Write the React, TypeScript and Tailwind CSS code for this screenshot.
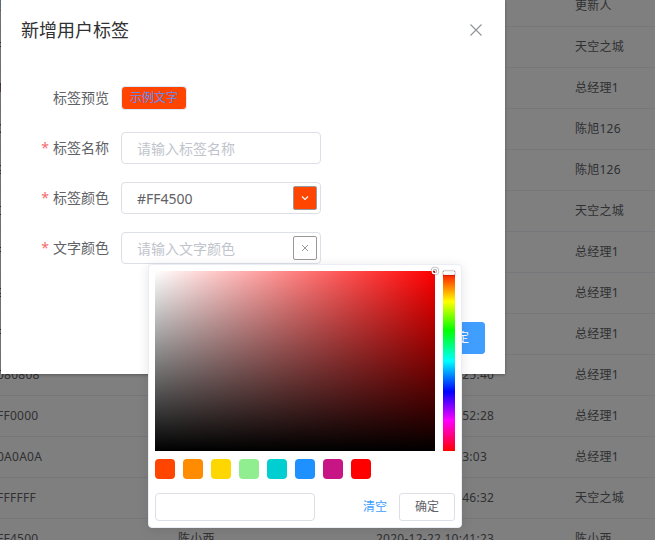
const rows = [
  { color: "颜色", creator: "创建人", time: "更新时间", user: "更新人" },
  { color: "#FF4500", creator: "天空之城", time: "2020-12-24 09:12:33", user: "天空之城" },
  { color: "#1E90FF", creator: "总经理1", time: "2020-12-24 09:10:21", user: "总经理1" },
  { color: "#C71585", creator: "陈旭126", time: "2020-12-23 18:05:47", user: "陈旭126" },
  { color: "#90EE90", creator: "陈旭126", time: "2020-12-23 17:58:12", user: "陈旭126" },
  { color: "#00CED1", creator: "天空之城", time: "2020-12-23 16:30:09", user: "天空之城" },
  { color: "#FFD700", creator: "总经理1", time: "2020-12-23 15:22:18", user: "总经理1" },
  { color: "#90EE90", creator: "总经理1", time: "2020-12-23 14:08:55", user: "总经理1" },
  { color: "#FF8C00", creator: "总经理1", time: "2020-12-23 11:47:02", user: "总经理1" },
  { color: "#080808", creator: "总经理1", time: "2020-12-23 10:25:40", user: "总经理1" },
  { color: "#FF0000", creator: "总经理1", time: "2020-12-22 19:52:28", user: "总经理1" },
  { color: "#0A0A0A", creator: "总经理1", time: "2020-12-22 9:13:03", user: "总经理1" },
  { color: "#FFFFFF", creator: "天空之城", time: "2020-12-22 14:46:32", user: "天空之城" },
  { color: "#FF4500", creator: "陈小西", time: "2020-12-22 10:41:23", user: "陈小西" },
];

const swatches = [
  "#FF4500",
  "#FF8C00",
  "#FFD700",
  "#90EE90",
  "#00CED1",
  "#1E90FF",
  "#C71585",
  "#FF0000",
];

const Label = ({ text, required }: { text: string; required?: boolean }) => (
  <label className="w-[100px] shrink-0 pr-3 text-right text-[14px] leading-8 text-[#606266]">
    {required && <span className="mr-1 text-[#F56C6C]">*</span>}
    {text}
  </label>
);

const ColorDropdown = () => (
  <div className="absolute left-1/2 top-[calc(100%+5px)] z-10 w-[314px] -translate-x-1/2 rounded border border-[#EBEEF5] bg-white p-[6px] shadow-[0_2px_12px_0_rgba(0,0,0,0.1)]">
    <div className="flex gap-2">
      <div className="relative h-[180px] w-[280px] bg-[#ff0000]">
        <div className="h-full w-full bg-[linear-gradient(to_right,#fff,rgba(255,255,255,0))]">
          <div className="h-full w-full bg-[linear-gradient(to_top,#000,rgba(0,0,0,0))]" />
        </div>
        <div className="absolute right-0 top-0 size-1 -translate-y-1/2 translate-x-1/2 rounded-full shadow-[0_0_0_1.5px_#fff,inset_0_0_1px_1px_rgba(0,0,0,0.3),0_0_1px_2px_rgba(0,0,0,0.4)]" />
      </div>
      <div className="relative h-[180px] w-3 bg-[linear-gradient(to_bottom,#f00_0%,#ff0_17%,#0f0_33%,#0ff_50%,#00f_67%,#f0f_83%,#f00_100%)]">
        <div className="absolute left-0 top-0 h-1 w-full rounded-[1px] border border-[#f0f0f0] bg-white shadow-[0_0_2px_rgba(0,0,0,0.6)]" />
      </div>
    </div>
    <div className="mt-2 flex gap-2">
      {swatches.map((c) => (
        <div key={c} className="size-5 rounded" style={{ backgroundColor: c }} />
      ))}
    </div>
    <div className="mt-[14px] flex items-center">
      <input
        readOnly
        className="h-7 w-[160px] rounded border border-[#DCDFE6] px-[15px] text-[12px] outline-none"
      />
      <span className="ml-auto mr-3 text-[12px] text-[#409EFF]">清空</span>
      <button className="h-7 rounded-[3px] border border-[#DCDFE6] bg-white px-[15px] text-[12px] text-[#606266]">
        确定
      </button>
    </div>
  </div>
);

export default function App() {
  return (
    <div className="relative h-[540px] w-[655px] overflow-hidden bg-white font-['Noto_Sans','Noto_Sans_CJK_SC',sans-serif]">
      {/* table behind the mask */}
      <div className="-ml-[11px] -mt-[14px] text-[12px] tracking-[0.25px] text-[#606266]">
        {rows.map((r, i) => (
          <div key={i} className="flex h-[41px] items-center border-b border-[#EBEEF5]">
            <div className="w-[189px] shrink-0">{r.color}</div>
            <div className="w-[198px] shrink-0">{r.creator}</div>
            <div className="w-[199px] shrink-0">{r.time}</div>
            <div>{r.user}</div>
          </div>
        ))}
      </div>

      <div className="absolute inset-0 bg-black/50" />

      {/* dialog */}
      <div className="absolute left-[1px] top-0 w-[504px] bg-white shadow-[0_1px_3px_rgba(0,0,0,0.3)]">
        <header className="flex items-center justify-between px-5 pb-[10px] pt-[18px]">
          <h2 className="text-[18px] leading-6 text-[#303133]">新增用户标签</h2>
          <svg width="16" height="16" viewBox="0 0 16 16" className="mr-[1px]">
            <path d="M2.5 2.5 13.5 13.5M13.5 2.5 2.5 13.5" stroke="#909399" strokeWidth="1.1" fill="none" />
          </svg>
        </header>

        <div className="px-5 py-[30px]">
          <div className="mb-[18px] flex h-8 items-center">
            <Label text="标签预览" />
            <span className="inline-flex h-6 items-center rounded border border-[#d9ecff] bg-[#FF4500] px-2 text-[12px] text-[#5c8dff]">
              示例文字
            </span>
          </div>

          <div className="mb-[18px] flex h-8 items-center">
            <Label text="标签名称" required />
            <input
              readOnly
              placeholder="请输入标签名称"
              className="h-8 w-[200px] rounded border border-[#DCDFE6] px-[15px] text-[14px] text-[#606266] outline-none placeholder:text-[#C0C4CC]"
            />
          </div>

          <div className="mb-[18px] flex h-8 items-center">
            <Label text="标签颜色" required />
            <div className="flex h-8 w-[200px] items-center rounded border border-[#DCDFE6]">
              <input
                readOnly
                value="#FF4500"
                className="min-w-0 flex-1 px-[15px] text-[14px] text-[#606266] outline-none"
              />
              <span className="mr-[3px] flex size-6 items-center justify-center rounded-[2px] border border-[#999] bg-[#FF4500]">
                <svg width="12" height="12" viewBox="0 0 12 12">
                  <path d="M3 4.5 6 7.5 9 4.5" stroke="#fff" strokeWidth="1.2" fill="none" />
                </svg>
              </span>
            </div>
          </div>

          <div className="mb-[18px] flex h-8 items-center">
            <Label text="文字颜色" required />
            <div className="flex h-8 w-[200px] items-center rounded border border-[#DCDFE6]">
              <input
                readOnly
                placeholder="请输入文字颜色"
                className="min-w-0 flex-1 px-[15px] text-[14px] text-[#606266] outline-none placeholder:text-[#C0C4CC]"
              />
              <span className="relative mr-[3px] flex size-6 items-center justify-center rounded-[2px] border border-[#999] bg-white">
                <svg width="10" height="10" viewBox="0 0 10 10">
                  <path d="M2 2 8 8M8 2 2 8" stroke="#999" strokeWidth="1" fill="none" />
                </svg>
                <ColorDropdown />
              </span>
            </div>
          </div>
        </div>

        <footer className="flex justify-end gap-[10px] px-5 pb-5 pt-[10px]">
          <button className="h-8 rounded-[3px] border border-[#DCDFE6] bg-white px-[15px] text-[12px] text-[#606266]">
            取消
          </button>
          <button className="h-8 rounded-[3px] border border-[#409EFF] bg-[#409EFF] px-[15px] text-[12px] text-white">
            确定
          </button>
        </footer>
      </div>
    </div>
  );
}
